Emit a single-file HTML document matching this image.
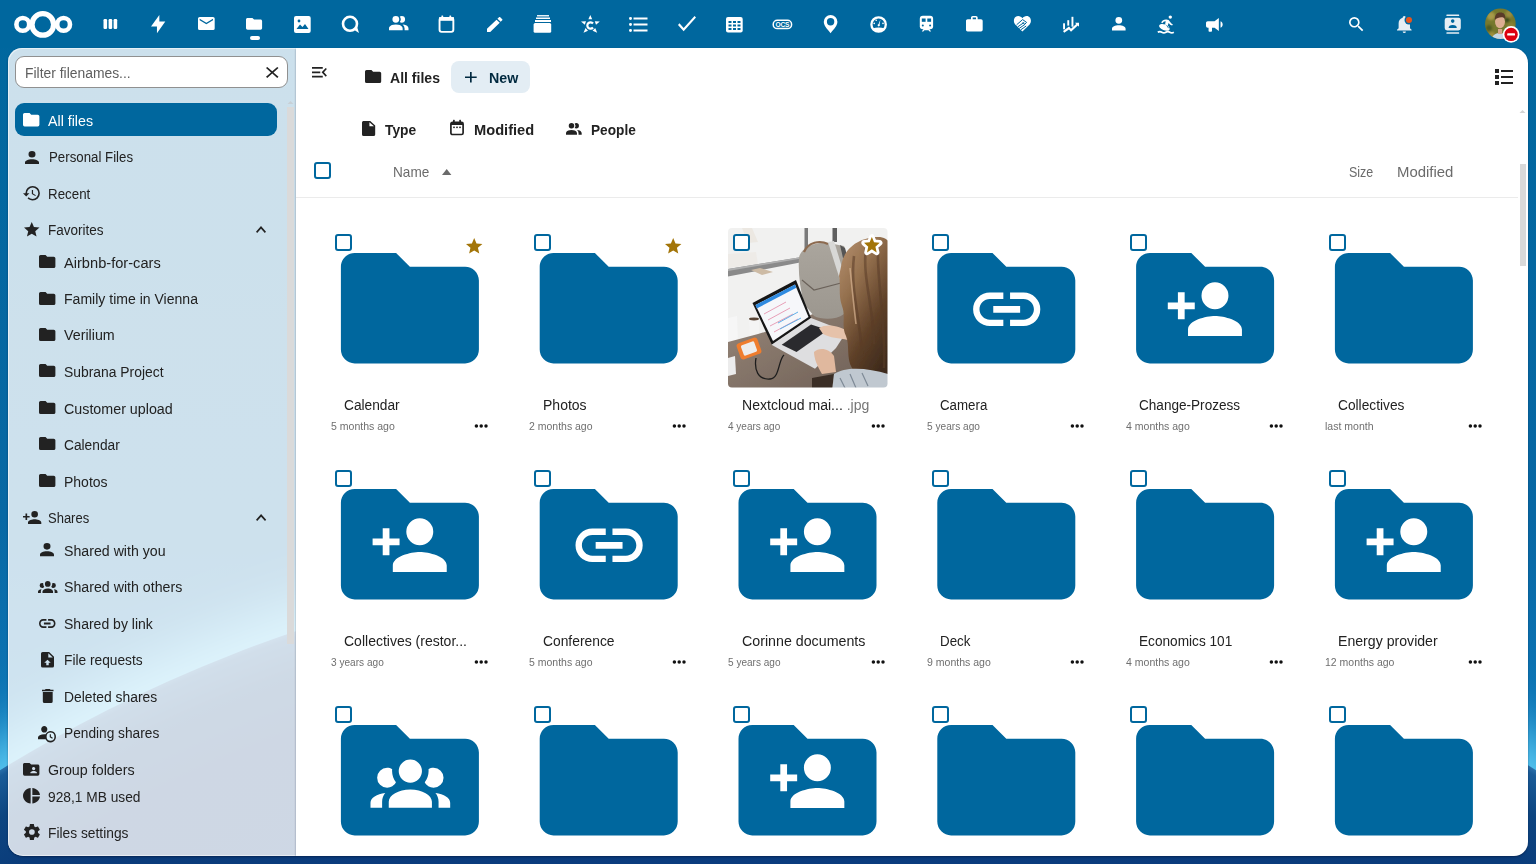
<!DOCTYPE html>
<html><head><meta charset="utf-8">
<style>
*{margin:0;padding:0;box-sizing:border-box}
html,body{width:1536px;height:864px;overflow:hidden}
body{position:relative;font-family:"Liberation Sans",sans-serif;background:#063a70}
.a{position:absolute;display:block;overflow:visible}
.t{position:absolute;white-space:nowrap;line-height:1}
</style></head><body>

<svg class="a" style="left:0;top:0;width:1536px;height:864px" viewBox="0 0 1536 864">
<defs>
<linearGradient id="bgg" x1="0" y1="0" x2="0" y2="864" gradientUnits="userSpaceOnUse">
<stop offset="0" stop-color="#00679e"/><stop offset="0.6" stop-color="#0868a4"/><stop offset="0.8" stop-color="#0c74b4"/><stop offset="1" stop-color="#1080c0"/>
</linearGradient>
<radialGradient id="glb" cx=".5" cy=".5" r=".5"><stop offset="0.75" stop-color="#0a3c7e"/><stop offset="0.93" stop-color="#0a3b7a"/><stop offset="0.97" stop-color="#0d4580"/><stop offset="0.996" stop-color="#1a5c98"/><stop offset="1" stop-color="#2a70aa"/></radialGradient>
<filter id="gblur" x="-20%" y="-20%" width="140%" height="140%"><feGaussianBlur stdDeviation="26"/></filter>
</defs>
<rect width="1536" height="864" fill="url(#bgg)"/>
<ellipse cx="768" cy="1873" rx="1425" ry="1344" fill="#5ccbf4" filter="url(#gblur)"/>
<ellipse cx="768" cy="1873" rx="1400" ry="1319" fill="url(#glb)"/>
</svg>
<div class="a" style="left:0;top:0;width:1536px;height:48px;background:#00679e"></div>
<svg class="a" style="left:0px;top:0px;width:90px;height:48px" viewBox="0 0 90 48"><g fill="none" stroke="#fff"><circle cx="42.8" cy="24.4" r="10.8" stroke-width="5.3"/><circle cx="22.8" cy="24.4" r="6.4" stroke-width="4.6"/><circle cx="63.6" cy="24.4" r="6.4" stroke-width="4.6"/></g></svg>
<svg class="a" style="left:100px;top:16px;width:20px;height:16px" viewBox="0 0 20 16"><g fill="#fff"><rect x="3.5" y="3" width="3.6" height="10" rx="1.2"/><rect x="8.6" y="3" width="3.6" height="10" rx="1.2"/><rect x="13.6" y="3" width="3.6" height="10" rx="1.2"/></g></svg>
<svg class="a" style="left:151.00px;top:15.00px;width:14.30px;height:18.20px" viewBox="6 1 12 22" preserveAspectRatio="none"><path fill="#fff" d="M11 15H6L13 1V9H18L11 23V15Z"/></svg>
<svg class="a" style="left:198.10px;top:17.30px;width:16.70px;height:13.00px" viewBox="2 4 20 16" preserveAspectRatio="none"><path fill="#fff" d="M20,8L12,13L4,8V6L12,11L20,6M20,4H4C2.89,4 2,4.89 2,6V18A2,2 0 0,0 4,20H20A2,2 0 0,0 22,18V6C22,4.89 21.1,4 20,4Z"/></svg>
<svg class="a" style="left:246.40px;top:18.00px;width:16.10px;height:11.70px" viewBox="2 4 20 16" preserveAspectRatio="none"><path fill="#fff" d="M10,4H4C2.89,4 2,4.89 2,6V18A2,2 0 0,0 4,20H20A2,2 0 0,0 22,18V8C22,6.89 21.1,6 20,6H12L10,4Z"/></svg>
<div class="a" style="left:249.5px;top:36px;width:10px;height:4.2px;border-radius:2px;background:#fff"></div>
<svg class="a" style="left:294px;top:15.5px;width:17px;height:17px" viewBox="0 0 17 17"><rect x="0" y="0" width="16.7" height="16.9" rx="2" fill="#fff"/><circle cx="5" cy="5" r="1.4" fill="#00679e"/><path d="M2.5 13 L6 8.5 L8.5 11 L11 8 L14.5 13Z" fill="#00679e"/></svg>
<svg class="a" style="left:340px;top:14px;width:22px;height:22px" viewBox="0 0 22 22"><circle cx="10" cy="9.8" r="7" fill="none" stroke="#fff" stroke-width="2.6"/><path d="M13.5 15.5 L19 19 L17 12.5Z" fill="#fff"/></svg>
<svg class="a" style="left:388.70px;top:16.00px;width:19.50px;height:14.30px" viewBox="2 3.9999475479125977 20 15.000052452087402" preserveAspectRatio="none"><path fill="#fff" d="M16 17V19H2V17S2 13 9 13 16 17 16 17M12.5 7.5A3.5 3.5 0 1 0 9 11A3.5 3.5 0 0 0 12.5 7.5M15.94 13A5.32 5.32 0 0 1 18 17V19H22V17S22 13.37 15.94 13M15 4A3.39 3.39 0 0 0 13.07 4.59A5 5 0 0 1 13.07 10.41A3.39 3.39 0 0 0 15 11A3.5 3.5 0 0 0 15 4Z"/></svg>
<svg class="a" style="left:436px;top:13px;width:22px;height:22px" viewBox="0 0 22 22"><rect x="3.55" y="4.95" width="13.8" height="13.9" rx="2" fill="none" stroke="#fff" stroke-width="1.9"/><rect x="3" y="4.2" width="15" height="3.6" fill="#fff"/><rect x="5.4" y="2.5" width="1.8" height="3" rx=".5" fill="#fff"/><rect x="13.4" y="2.5" width="1.8" height="3" rx=".5" fill="#fff"/></svg>
<svg class="a" style="left:486.50px;top:16.70px;width:15.50px;height:14.90px" viewBox="3 2.997499942779541 18.002500534057617 18.002500534057617" preserveAspectRatio="none"><path fill="#fff" d="M20.71,7.04C21.1,6.65 21.1,6 20.71,5.63L18.37,3.29C18,2.9 17.35,2.9 16.96,3.29L15.12,5.12L18.87,8.87M3,17.25V21H6.75L17.81,9.93L14.06,6.18L3,17.25Z"/></svg>
<svg class="a" style="left:532px;top:14px;width:22px;height:20px" viewBox="0 0 22 20"><g fill="#fff"><rect x="5" y="1" width="12" height="1.5" opacity=".9"/><rect x="4" y="3.5" width="14" height="1.5"/><rect x="3" y="6" width="16" height="2"/><rect x="1.6" y="9" width="17.6" height="9.8" rx="1.5"/></g></svg>
<svg class="a" style="left:578px;top:13px;width:25px;height:22px" viewBox="0 0 25 22"><g fill="#fff"><path d="M12.3 2 L14.2 6.2 L10.4 6.2Z"/><path d="M3 8.5 L8 8.2 L6.8 11.8Z"/><path d="M21.8 8.5 L16.8 8.2 L18 11.8Z"/><path d="M5.5 19.7 L7.5 15 L10 17.8Z"/><path d="M19.2 19.7 L17.2 15 L14.6 17.8Z"/></g><path d="M15 10.5 A3.2 3.2 0 1 0 15 14.5" fill="none" stroke="#fff" stroke-width="2.2"/></svg>
<svg class="a" style="left:628.90px;top:16.70px;width:18.50px;height:14.90px" viewBox="2.5 4.5 18.5 15" preserveAspectRatio="none"><path fill="#fff" d="M7,5H21V7H7V5M7,13V11H21V13H7M4,4.5A1.5,1.5 0 0,1 5.5,6A1.5,1.5 0 0,1 4,7.5A1.5,1.5 0 0,1 2.5,6A1.5,1.5 0 0,1 4,4.5M4,10.5A1.5,1.5 0 0,1 5.5,12A1.5,1.5 0 0,1 4,13.5A1.5,1.5 0 0,1 2.5,12A1.5,1.5 0 0,1 4,10.5M7,19V17H21V19H7M4,16.5A1.5,1.5 0 0,1 5.5,18A1.5,1.5 0 0,1 4,19.5A1.5,1.5 0 0,1 2.5,18A1.5,1.5 0 0,1 4,16.5Z"/></svg>
<svg class="a" style="left:677.70px;top:15.50px;width:18.00px;height:15.20px" viewBox="3.5 5.590000152587891 17.5 13.40999984741211" preserveAspectRatio="none"><path fill="#fff" d="M21,7L9,19L3.5,13.5L4.91,12.09L9,16.17L19.59,5.59L21,7Z"/></svg>
<svg class="a" style="left:726px;top:16.7px;width:17px;height:16px" viewBox="0 0 17 16"><rect x="0" y="0" width="16.7" height="15.5" rx="2" fill="#fff"/><g fill="#00679e"><rect x="2.5" y="4" width="3" height="2"/><rect x="7" y="4" width="3" height="2"/><rect x="11.5" y="4" width="3" height="2"/><rect x="2.5" y="7.5" width="3" height="2"/><rect x="7" y="7.5" width="3" height="2"/><rect x="11.5" y="7.5" width="3" height="2"/><rect x="2.5" y="11" width="3" height="2"/><rect x="7" y="11" width="3" height="2"/><rect x="11.5" y="11" width="3" height="2"/></g></svg>
<svg class="a" style="left:772px;top:18.5px;width:21px;height:11px" viewBox="0 0 21 11"><rect x="1.2" y="1.3" width="18.4" height="8.3" rx="4.15" fill="#00679e" stroke="#fff" stroke-width="1.5"/><text x="10.4" y="8.2" font-size="6.6" font-weight="700" text-anchor="middle" fill="#fff" font-family="Liberation Sans" letter-spacing="-.2">OCS</text></svg>
<svg class="a" style="left:820px;top:12px;width:22px;height:24px" viewBox="0 0 22 24"><path fill="#fff" fill-rule="evenodd" d="M10.6 21.2 C7 17 3.8 13.5 3.8 9.8 A6.8 6.8 0 0 1 17.4 9.8 C17.4 13.5 14.2 17 10.6 21.2Z M10.6 6.1 A3.7 3.7 0 1 0 10.6 13.5 A3.7 3.7 0 1 0 10.6 6.1Z"/></svg>
<svg class="a" style="left:868px;top:13.5px;width:21px;height:21px" viewBox="0 0 21 21"><circle cx="10.6" cy="10.5" r="7.2" fill="none" stroke="#fff" stroke-width="2.3"/><path d="M4.4 14.6 Q10.6 12.2 16.8 14.6 L15.6 16.4 Q10.6 18.6 5.6 16.4Z" fill="#fff"/><path d="M10 11.4 L12.4 5.4 L11.4 11.8Z" fill="#fff"/><circle cx="10.7" cy="11.3" r="1.1" fill="#fff"/><circle cx="6.2" cy="9.4" r=".8" fill="#fff"/><circle cx="8.2" cy="6.2" r=".8" fill="#fff"/><circle cx="15" cy="9.4" r=".8" fill="#fff"/></svg>
<svg class="a" style="left:918px;top:14px;width:17px;height:20px" viewBox="0 0 17 20"><rect x="1.8" y="1.8" width="13.3" height="13.5" rx="3" fill="#fff"/><rect x="3.8" y="4.5" width="3.8" height="3.3" fill="#00679e"/><rect x="9.3" y="4.5" width="3.8" height="3.3" fill="#00679e"/><circle cx="4.8" cy="11.5" r="1" fill="#00679e"/><circle cx="12.1" cy="11.5" r="1" fill="#00679e"/><path d="M3.8 17.6 L5.5 15 H11.4 L13.1 17.6 H11.6 L10.5 16.2 H6.4 L5.3 17.6Z" fill="#fff"/></svg>
<svg class="a" style="left:966.20px;top:15.80px;width:16.70px;height:15.40px" viewBox="2 2 20 19" preserveAspectRatio="none"><path fill="#fff" d="M10,2H14A2,2 0 0,1 16,4V6H20A2,2 0 0,1 22,8V19A2,2 0 0,1 20,21H4C2.89,21 2,20.1 2,19V8C2,6.89 2.89,6 4,6H8V4C8,2.89 8.89,2 10,2M14,6V4H10V6H14Z"/></svg>
<svg class="a" style="left:1012px;top:14px;width:21px;height:20px" viewBox="0 0 21 20"><path d="M10.4 17.4 L3.2 10.4 C0.8 8 1.6 2 6.2 2 C8 2 9.4 3 10.4 4.2 C11.4 3 12.8 2 14.6 2 C19.2 2 20 8 17.6 10.4Z" fill="#fff"/><g stroke="#00679e" stroke-width="1" fill="none" stroke-linecap="butt"><path d="M4.6 10.8 L10.6 5.6 L14.6 8.4 L12.8 10.2 L10.6 8.6"/><path d="M5.8 12.8 L12.2 8.4"/><path d="M7.2 14.4 L13.2 10.2"/><path d="M8.8 15.8 L14.2 12"/></g></svg>
<svg class="a" style="left:1061px;top:14px;width:20px;height:20px" viewBox="0 0 20 20"><g fill="#fff"><rect x="2.1" y="9.3" width="1.9" height="6"/><rect x="6.3" y="6.2" width="1.9" height="5.4"/><rect x="10.5" y="2.8" width="1.9" height="9.9"/><path d="M2 17 L8 12.6 L10 14.8 L15.2 10 L14 8.8 H18 V12.8 L16.8 11.6 L10 17.8 L8 15.6 L3.2 18.8Z"/></g></svg>
<svg class="a" style="left:1111.60px;top:17.30px;width:13.60px;height:13.40px" viewBox="4 4 16 16" preserveAspectRatio="none"><path fill="#fff" d="M12,4A4,4 0 0,1 16,8A4,4 0 0,1 12,12A4,4 0 0,1 8,8A4,4 0 0,1 12,4M12,14C16.42,14 20,15.79 20,18V20H4V18C4,15.79 7.58,14 12,14Z"/></svg>
<svg class="a" style="left:1156px;top:13px;width:21px;height:22px" viewBox="0 0 21 22"><g fill="#fff"><circle cx="14.3" cy="4.1" r="1.7"/><path d="M5.2 9.4 C6 7.6 8 6.4 10.5 6.6 L12.6 7.1 L15.4 10.6 L16.9 11.4 L16.1 12.6 L14.2 11.7 L12.6 9.9 L11.8 12.4 L13.2 15 L11.2 15.8 L9.6 13.1 L9.2 10.1 L10 8.4 L8 8.6 L6.3 10.2Z"/><ellipse cx="8.4" cy="14.3" rx="5.6" ry="2.9" transform="rotate(22 8.4 14.3)"/></g><path d="M10.6 12.2 L12.6 15.2" stroke="#00679e" stroke-width=".8"/><path d="M1.8 19.2 Q3.8 17.9 5.8 19.2 T9.8 19.2 T13.8 19.2 T17.8 19.2" fill="none" stroke="#fff" stroke-width="1.7"/></svg>
<svg class="a" style="left:1205.70px;top:17.90px;width:16.70px;height:13.70px" viewBox="2 4 19.5 17" preserveAspectRatio="none"><path fill="#fff" d="M12,8H4A2,2 0 0,0 2,10V14A2,2 0 0,0 4,16H5V20A1,1 0 0,0 6,21H8A1,1 0 0,0 9,20V16H12L17,20V4L12,8M21.5,12C21.5,13.71 20.54,15.26 19,16V8C20.53,8.75 21.5,10.3 21.5,12Z"/></svg>
<svg class="a" style="left:1349.00px;top:16.60px;width:14.30px;height:14.30px" viewBox="3 3 17.5 17.5" preserveAspectRatio="none"><path fill="#fff" d="M9.5,3A6.5,6.5 0 0,1 16,9.5C16,11.11 15.41,12.59 14.44,13.73L14.71,14H15.5L20.5,19L19,20.5L14,15.5V14.71L13.73,14.44C12.59,15.41 11.11,16 9.5,16A6.5,6.5 0 0,1 3,9.5A6.5,6.5 0 0,1 9.5,3M9.5,5C7,5 5,7 5,9.5C5,12 7,14 9.5,14C12,14 14,12 14,9.5C14,7 12,5 9.5,5Z"/></svg>
<svg class="a" style="left:1397.20px;top:15.60px;width:14.60px;height:17.00px" viewBox="3 2 18 21" preserveAspectRatio="none"><path fill="#e6eef4" d="M21,19V20H3V19L5,17V11C5,7.9 7.03,5.17 10,4.29C10,4.19 10,4.1 10,4A2,2 0 0,1 12,2A2,2 0 0,1 14,4C14,4.1 14,4.19 14,4.29C16.97,5.17 19,7.9 19,11V17L21,19M14,21A2,2 0 0,1 12,23A2,2 0 0,1 10,21"/></svg>
<div class="a" style="left:1406.1px;top:17px;width:6px;height:6px;border-radius:50%;background:#e9541c;box-shadow:0 0 0 1.5px #00679e"></div>
<svg class="a" style="left:1443px;top:13px;width:19px;height:22px" viewBox="0 0 19 22"><g fill="#e6eef4"><rect x="3.4" y="1.5" width="12.8" height="1.5" rx=".5"/><rect x="3.4" y="19.2" width="12.8" height="1.5" rx=".5"/><rect x="1.7" y="4.7" width="16.1" height="12.8" rx="2.4"/></g><circle cx="9.7" cy="8.1" r="1.8" fill="#00679e"/><path d="M5.6 14.9 A4.1 3 0 0 1 13.8 14.9Z" fill="#00679e"/></svg>
<svg class="a" style="left:1484px;top:7px;width:40px;height:40px" viewBox="0 0 40 40">
<defs><clipPath id="avc"><circle cx="16.4" cy="16.8" r="15.3"/></clipPath>
<filter id="avb"><feGaussianBlur stdDeviation="1.2"/></filter></defs>
<g clip-path="url(#avc)"><rect width="40" height="40" fill="#76782e"/>
<g filter="url(#avb)"><circle cx="7" cy="9" r="4" fill="#a89a48"/><circle cx="25" cy="7" r="3.5" fill="#9a8c40"/><circle cx="27" cy="19" r="3.5" fill="#8a8238"/><circle cx="5" cy="21" r="3" fill="#4e5a22"/><circle cx="23" cy="13" r="2.5" fill="#3e4a1c"/><circle cx="8" cy="28" r="3" fill="#a0903c"/></g>
<path d="M7.5 34 C7.5 28.5 11.5 26 16 26 C20.5 26 23.5 28.5 23.5 34Z" fill="#c5d6e4"/>
<rect x="14" y="22" width="4.2" height="5" fill="#d6a488"/>
<ellipse cx="16" cy="14.8" rx="5" ry="6.4" fill="#dcae92"/>
<path d="M10.8 13 C10.6 7.4 13.4 5.6 16.4 5.6 C19.8 5.6 21.6 7.6 21.4 12 C19.6 9.2 14 9.6 10.8 13Z" fill="#5a3a28"/>
</g>
<circle cx="27.1" cy="27.4" r="8.4" fill="#fff"/><circle cx="27.1" cy="27.4" r="6.7" fill="#dd0010"/><rect x="23.2" y="26.3" width="7.8" height="2.3" rx=".6" fill="#fff"/>
</svg>
<div class="a" style="left:8px;top:48px;width:288px;height:808px;border-radius:14px 0 0 15px;background:rgba(255,255,255,0.8);box-shadow:inset 1px 1px 0 rgba(255,255,255,.5),inset 0 -1px 0 rgba(255,255,255,.5),0 1px 2px rgba(0,10,40,.45);overflow:hidden"></div>
<div class="a" style="left:287.2px;top:106.7px;width:6.6px;height:537px;background:#dadada"></div>
<div class="a" style="left:15px;top:55.7px;width:273px;height:32.5px;border:1.8px solid #909090;border-radius:9px;background:#fff"></div>
<div class="t" style="left:25.30px;top:65.05px;font-size:15.1px;color:#5e5e5e;font-weight:400;transform:scaleX(0.9195);transform-origin:0 0;">Filter filenames...</div>
<svg class="a" style="left:265.60px;top:67.20px;width:12.50px;height:10.90px" viewBox="5 5 14 14" preserveAspectRatio="none"><path fill="#222" d="M19,6.41L17.59,5L12,10.59L6.41,5L5,6.41L10.59,12L5,17.59L6.41,19L12,13.41L17.59,19L19,17.59L13.41,12L19,6.41Z"/></svg>
<div class="a" style="left:15.1px;top:103px;width:262.2px;height:33.2px;border-radius:9px;background:#00679e"></div>
<svg class="a" style="left:23.40px;top:113.00px;width:16.40px;height:13.50px" viewBox="2 4 20 16" preserveAspectRatio="none"><path fill="#fff" d="M10,4H4C2.89,4 2,4.89 2,6V18A2,2 0 0,0 4,20H20A2,2 0 0,0 22,18V8C22,6.89 21.1,6 20,6H12L10,4Z"/></svg>
<div class="t" style="left:48.00px;top:112.90px;font-size:15.2px;color:#fff;font-weight:400;transform:scaleX(0.9366);transform-origin:0 0;">All files</div>
<svg class="a" style="left:24.50px;top:151.00px;width:14.00px;height:13.00px" viewBox="4 4 16 16" preserveAspectRatio="none"><path fill="#222" d="M12,4A4,4 0 0,1 16,8A4,4 0 0,1 12,12A4,4 0 0,1 8,8A4,4 0 0,1 12,4M12,14C16.42,14 20,15.79 20,18V20H4V18C4,15.79 7.58,14 12,14Z"/></svg>
<div class="t" style="left:48.90px;top:149.00px;font-size:15.2px;color:#222;font-weight:400;transform:scaleX(0.8732);transform-origin:0 0;">Personal Files</div>
<svg class="a" style="left:23.10px;top:186.00px;width:16.90px;height:14.50px" viewBox="1 3 21 18" preserveAspectRatio="none"><path fill="#222" d="M13.5,8H12V13L16.28,15.54L17,14.33L13.5,12.25V8M13,3A9,9 0 0,0 4,12H1L4.96,16.03L9,12H6A7,7 0 0,1 13,5A7,7 0 0,1 20,12A7,7 0 0,1 13,19C11.07,19 9.32,18.21 8.06,16.94L6.64,18.36C8.27,20 10.5,21 13,21A9,9 0 0,0 22,12A9,9 0 0,0 13,3"/></svg>
<div class="t" style="left:48.30px;top:185.60px;font-size:15.2px;color:#222;font-weight:400;transform:scaleX(0.8784);transform-origin:0 0;">Recent</div>
<svg class="a" style="left:23.70px;top:222.00px;width:15.50px;height:14.50px" viewBox="2 2 20 19" preserveAspectRatio="none"><path fill="#222" d="M12,17.27L18.18,21L16.54,13.970L22,9.24L14.81,8.62L12,2L9.19,8.62L2,9.24L7.45,13.97L5.82,21L12,17.27Z"/></svg>
<div class="t" style="left:48.30px;top:222.10px;font-size:15.2px;color:#222;font-weight:400;transform:scaleX(0.8896);transform-origin:0 0;">Favorites</div>
<svg class="a" style="left:256.00px;top:226.00px;width:10.00px;height:7.00px" viewBox="6 8 12 7.409999847412109" preserveAspectRatio="none"><path fill="#222" d="M7.41,15.41L12,10.83L16.59,15.41L18,14L12,8L6,14L7.41,15.41Z"/></svg>
<svg class="a" style="left:38.80px;top:255.20px;width:16.40px;height:13.10px" viewBox="2 4 20 16" preserveAspectRatio="none"><path fill="#222" d="M10,4H4C2.89,4 2,4.89 2,6V18A2,2 0 0,0 4,20H20A2,2 0 0,0 22,18V8C22,6.89 21.1,6 20,6H12L10,4Z"/></svg>
<div class="t" style="left:63.60px;top:254.90px;font-size:15.2px;color:#222;font-weight:400;transform:scaleX(0.9630);transform-origin:0 0;">Airbnb-for-cars</div>
<svg class="a" style="left:38.80px;top:291.50px;width:16.40px;height:13.10px" viewBox="2 4 20 16" preserveAspectRatio="none"><path fill="#222" d="M10,4H4C2.89,4 2,4.89 2,6V18A2,2 0 0,0 4,20H20A2,2 0 0,0 22,18V8C22,6.89 21.1,6 20,6H12L10,4Z"/></svg>
<div class="t" style="left:63.60px;top:291.20px;font-size:15.2px;color:#222;font-weight:400;transform:scaleX(0.9246);transform-origin:0 0;">Family time in Vienna</div>
<svg class="a" style="left:38.80px;top:327.70px;width:16.40px;height:13.10px" viewBox="2 4 20 16" preserveAspectRatio="none"><path fill="#222" d="M10,4H4C2.89,4 2,4.89 2,6V18A2,2 0 0,0 4,20H20A2,2 0 0,0 22,18V8C22,6.89 21.1,6 20,6H12L10,4Z"/></svg>
<div class="t" style="left:63.60px;top:327.40px;font-size:15.2px;color:#222;font-weight:400;transform:scaleX(0.9396);transform-origin:0 0;">Verilium</div>
<svg class="a" style="left:38.80px;top:364.40px;width:16.40px;height:13.10px" viewBox="2 4 20 16" preserveAspectRatio="none"><path fill="#222" d="M10,4H4C2.89,4 2,4.89 2,6V18A2,2 0 0,0 4,20H20A2,2 0 0,0 22,18V8C22,6.89 21.1,6 20,6H12L10,4Z"/></svg>
<div class="t" style="left:63.60px;top:364.10px;font-size:15.2px;color:#222;font-weight:400;transform:scaleX(0.9138);transform-origin:0 0;">Subrana Project</div>
<svg class="a" style="left:38.80px;top:401.00px;width:16.40px;height:13.10px" viewBox="2 4 20 16" preserveAspectRatio="none"><path fill="#222" d="M10,4H4C2.89,4 2,4.89 2,6V18A2,2 0 0,0 4,20H20A2,2 0 0,0 22,18V8C22,6.89 21.1,6 20,6H12L10,4Z"/></svg>
<div class="t" style="left:63.60px;top:400.70px;font-size:15.2px;color:#222;font-weight:400;transform:scaleX(0.9400);transform-origin:0 0;">Customer upload</div>
<svg class="a" style="left:38.80px;top:437.20px;width:16.40px;height:13.10px" viewBox="2 4 20 16" preserveAspectRatio="none"><path fill="#222" d="M10,4H4C2.89,4 2,4.89 2,6V18A2,2 0 0,0 4,20H20A2,2 0 0,0 22,18V8C22,6.89 21.1,6 20,6H12L10,4Z"/></svg>
<div class="t" style="left:63.60px;top:436.90px;font-size:15.2px;color:#222;font-weight:400;transform:scaleX(0.9046);transform-origin:0 0;">Calendar</div>
<svg class="a" style="left:38.80px;top:473.90px;width:16.40px;height:13.10px" viewBox="2 4 20 16" preserveAspectRatio="none"><path fill="#222" d="M10,4H4C2.89,4 2,4.89 2,6V18A2,2 0 0,0 4,20H20A2,2 0 0,0 22,18V8C22,6.89 21.1,6 20,6H12L10,4Z"/></svg>
<div class="t" style="left:63.60px;top:473.60px;font-size:15.2px;color:#222;font-weight:400;transform:scaleX(0.9214);transform-origin:0 0;">Photos</div>
<svg class="a" style="left:22.70px;top:510.50px;width:18.30px;height:13.00px" viewBox="1 4 22 16" preserveAspectRatio="none"><path fill="#222" d="M15,14C12.33,14 7,15.33 7,18V20H23V18C23,15.33 17.67,14 15,14M6,10V7H4V10H1V12H4V15H6V12H9V10M15,12A4,4 0 0,0 19,8A4,4 0 0,0 15,4A4,4 0 0,0 11,8A4,4 0 0,0 15,12Z"/></svg>
<div class="t" style="left:48.20px;top:510.10px;font-size:15.2px;color:#222;font-weight:400;transform:scaleX(0.8556);transform-origin:0 0;">Shares</div>
<svg class="a" style="left:255.60px;top:513.50px;width:10.20px;height:7.10px" viewBox="6 8 12 7.409999847412109" preserveAspectRatio="none"><path fill="#222" d="M7.41,15.41L12,10.83L16.59,15.41L18,14L12,8L6,14L7.41,15.41Z"/></svg>
<svg class="a" style="left:40.00px;top:543.30px;width:14.00px;height:13.30px" viewBox="4 4 16 16" preserveAspectRatio="none"><path fill="#222" d="M12,4A4,4 0 0,1 16,8A4,4 0 0,1 12,12A4,4 0 0,1 8,8A4,4 0 0,1 12,4M12,14C16.42,14 20,15.79 20,18V20H4V18C4,15.79 7.58,14 12,14Z"/></svg>
<div class="t" style="left:63.60px;top:542.70px;font-size:15.2px;color:#222;font-weight:400;transform:scaleX(0.9330);transform-origin:0 0;">Shared with you</div>
<svg class="a" style="left:37.50px;top:581.00px;width:19.50px;height:12.00px" viewBox="0 5.5 24 14.5" preserveAspectRatio="none"><path fill="#222" d="M12,5.5A3.5,3.5 0 0,1 15.5,9A3.5,3.5 0 0,1 12,12.5A3.5,3.5 0 0,1 8.5,9A3.5,3.5 0 0,1 12,5.5M5,8C5.56,8 6.08,8.15 6.53,8.42C6.38,9.85 6.8,11.27 7.66,12.38C7.16,13.34 6.16,14 5,14A3,3 0 0,1 2,11A3,3 0 0,1 5,8M19,8A3,3 0 0,1 22,11A3,3 0 0,1 19,14C17.84,14 16.84,13.34 16.34,12.38C17.2,11.27 17.62,9.850 17.47,8.42C17.92,8.15 18.44,8 19,8M5.5,18.25C5.5,16.18 8.41,14.5 12,14.5C15.59,14.5 18.5,16.18 18.5,18.25V20H5.5V18.25M0,20V18.5C0,17.11 1.890,15.940 4.45,15.6C3.86,16.28 3.5,17.22 3.5,18.25V20H0M24,20H20.5V18.25C20.5,17.22 20.14,16.28 19.55,15.6C22.11,15.94 24,17.11 24,18.5V20Z"/></svg>
<div class="t" style="left:63.60px;top:579.20px;font-size:15.2px;color:#222;font-weight:400;transform:scaleX(0.9342);transform-origin:0 0;">Shared with others</div>
<svg class="a" style="left:38.50px;top:618.70px;width:16.50px;height:9.00px" viewBox="2 7 20 10" preserveAspectRatio="none"><path fill="#222" d="M3.9,12C3.9,10.29 5.29,8.9 7,8.9H11V7H7A5,5 0 0,0 2,12A5,5 0 0,0 7,17H11V15.1H7C5.29,15.1 3.9,13.71 3.9,12M8,13H16V11H8V13M17,7H13V8.9H17C18.71,8.9 20.1,10.29 20.1,12C20.1,13.71 18.71,15.1 17,15.1H13V17H17A5,5 0 0,0 22,12A5,5 0 0,0 17,7Z"/></svg>
<div class="t" style="left:63.60px;top:615.70px;font-size:15.2px;color:#222;font-weight:400;transform:scaleX(0.9227);transform-origin:0 0;">Shared by link</div>
<svg class="a" style="left:40.50px;top:652.00px;width:13.00px;height:15.50px" viewBox="4 2 16 20" preserveAspectRatio="none"><path fill="#222" d="M14,2H6A2,2 0 0,0 4,4V20A2,2 0 0,0 6,22H18A2,2 0 0,0 20,20V8L14,2M13.5,16V19H10.5V16H8L12,12L16,16H13.5M13,9V3.5L18.5,9H13Z"/></svg>
<div class="t" style="left:63.60px;top:652.20px;font-size:15.2px;color:#222;font-weight:400;transform:scaleX(0.9044);transform-origin:0 0;">File requests</div>
<svg class="a" style="left:41.50px;top:688.50px;width:11.50px;height:14.00px" viewBox="5 3 14 18" preserveAspectRatio="none"><path fill="#222" d="M19,4H15.5L14.5,3H9.5L8.5,4H5V6H19M6,19A2,2 0 0,0 8,21H16A2,2 0 0,0 18,19V7H6V19Z"/></svg>
<div class="t" style="left:63.60px;top:688.70px;font-size:15.2px;color:#222;font-weight:400;transform:scaleX(0.9126);transform-origin:0 0;">Deleted shares</div>
<svg class="a" style="left:38.00px;top:725.50px;width:18.00px;height:16.50px" viewBox="1 4 23.000381469726562 20" preserveAspectRatio="none"><path fill="#222" d="M10.63,14.1C12.23,10.58 16.38,9.03 19.9,10.63C23.42,12.23 24.97,16.38 23.37,19.9C22.24,22.4 19.75,24 17,24C14.3,24 11.83,22.44 10.67,20H1V18C1.06,16.86 1.84,15.93 3.34,15.18C4.84,14.43 6.72,14.04 9,14C9.57,14 10.11,14.05 10.63,14.1V14.1M9,4C10.12,4.03 11.06,4.42 11.81,5.17C12.56,5.92 12.93,6.86 12.93,8C12.93,9.14 12.56,10.08 11.81,10.83C11.06,11.58 10.12,11.95 9,11.95C7.88,11.95 6.94,11.58 6.19,10.830C5.44,10.08 5.07,9.14 5.07,8C5.07,6.86 5.44,5.92 6.19,5.17C6.94,4.42 7.88,4.03 9,4M17,22A5,5 0 0,0 22,17A5,5 0 0,0 17,12A5,5 0 0,0 12,17A5,5 0 0,0 17,22M16,14H17.5V16.82L19.94,18.23L19.19,19.53L16,17.69V14Z"/></svg>
<div class="t" style="left:63.60px;top:725.20px;font-size:15.2px;color:#222;font-weight:400;transform:scaleX(0.9023);transform-origin:0 0;">Pending shares</div>
<svg class="a" style="left:23.10px;top:762.80px;width:16.40px;height:12.70px" viewBox="2 4 20 16" preserveAspectRatio="none"><path fill="#222" d="M19,17H11V16C11,14.67 13.67,14 15,14C16.33,14 19,14.67 19,16M15,9A2,2 0 0,1 17,11A2,2 0 0,1 15,13A2,2 0 0,1 13,11C13,9.89 13.9,9 15,9M20,6H12L10,4H4C2.89,4 2,4.89 2,6V18A2,2 0 0,0 4,20H20A2,2 0 0,0 22,18V8C22,6.89 21.1,6 20,6Z"/></svg>
<div class="t" style="left:48.30px;top:761.50px;font-size:15.2px;color:#222;font-weight:400;transform:scaleX(0.9414);transform-origin:0 0;">Group folders</div>
<svg class="a" style="left:23.00px;top:788.30px;width:17.00px;height:15.50px" viewBox="2 2 20 20" preserveAspectRatio="none"><path fill="#222" d="M11,2V22C5.9,21.5 2,17.2 2,12C2,6.8 5.9,2.5 11,2M13,2V11H22C21.5,6.2 17.8,2.5 13,2M13,13V22C17.7,21.5 21.5,17.8 22,13H13Z"/></svg>
<div class="t" style="left:48.30px;top:788.50px;font-size:15.2px;color:#222;font-weight:400;transform:scaleX(0.9056);transform-origin:0 0;">928,1 MB used</div>
<svg class="a" style="left:23.70px;top:824.20px;width:15.80px;height:16.10px" viewBox="2.2706682682037354 2 19.454246520996094 20" preserveAspectRatio="none"><path fill="#222" d="M12,15.5A3.5,3.5 0 0,1 8.5,12A3.5,3.5 0 0,1 12,8.5A3.5,3.5 0 0,1 15.5,12A3.5,3.5 0 0,1 12,15.5M19.43,12.97C19.47,12.65 19.5,12.33 19.5,12C19.5,11.67 19.47,11.34 19.43,11L21.54,9.37C21.73,9.22 21.78,8.95 21.66,8.73L19.66,5.27C19.54,5.05 19.27,4.96 19.05,5.05L16.56,6.05C16.04,5.66 15.5,5.32 14.87,5.07L14.5,2.42C14.46,2.18 14.25,2 14,2H10C9.75,2 9.54,2.18 9.5,2.42L9.13,5.07C8.5,5.32 7.96,5.66 7.44,6.05L4.95,5.05C4.73,4.96 4.46,5.05 4.34,5.27L2.34,8.73C2.21,8.95 2.27,9.22 2.46,9.37L4.57,11C4.53,11.34 4.5,11.67 4.5,12C4.5,12.33 4.53,12.65 4.57,12.97L2.46,14.63C2.27,14.78 2.21,15.05 2.34,15.27L4.34,18.73C4.46,18.95 4.73,19.03 4.95,18.95L7.44,17.94C7.96,18.34 8.5,18.68 9.13,18.93L9.5,21.58C9.54,21.82 9.75,22 10,22H14C14.25,22 14.46,21.82 14.5,21.58L14.87,18.93C15.5,18.67 16.04,18.34 16.56,17.94L19.05,18.95C19.27,19.03 19.54,18.95 19.66,18.73L21.66,15.27C21.78,15.05 21.73,14.78 21.54,14.63L19.43,12.97Z"/></svg>
<div class="t" style="left:48.30px;top:824.90px;font-size:15.2px;color:#222;font-weight:400;transform:scaleX(0.9076);transform-origin:0 0;">Files settings</div>
<div class="a" style="left:296px;top:48px;width:1232px;height:808px;border-radius:0 15px 14px 0;background:#fff;box-shadow:0 1px 2px rgba(0,10,40,.45)"></div>
<svg class="a" style="left:312.00px;top:67.20px;width:14.90px;height:10.60px" viewBox="3 6 18 12" preserveAspectRatio="none"><path fill="#222" d="M21,15.61L19.59,17L14.58,12L19.59,7L21,8.39L17.44,12L21,15.61M3,6H16V8H3V6M3,13V11H13V13H3M3,18V16H16V18H3Z"/></svg>
<svg class="a" style="left:365.20px;top:70.30px;width:16.20px;height:13.10px" viewBox="2 4 20 16" preserveAspectRatio="none"><path fill="#222" d="M10,4H4C2.89,4 2,4.89 2,6V18A2,2 0 0,0 4,20H20A2,2 0 0,0 22,18V8C22,6.89 21.1,6 20,6H12L10,4Z"/></svg>
<div class="t" style="left:389.90px;top:70.80px;font-size:14.6px;color:#222;font-weight:700;transform:scaleX(0.9628);transform-origin:0 0;">All files</div>
<div class="a" style="left:451.4px;top:60.6px;width:78.5px;height:32.5px;border-radius:8px;background:#e3edf4"></div>
<svg class="a" style="left:465.30px;top:72.00px;width:11.70px;height:10.60px" viewBox="5 5 14 14" preserveAspectRatio="none"><path fill="#00293f" d="M19,13H13V19H11V13H5V11H11V5H13V11H19V13Z"/></svg>
<div class="t" style="left:488.90px;top:70.80px;font-size:14.6px;color:#00293f;font-weight:700;transform:scaleX(0.9751);transform-origin:0 0;">New</div>
<svg class="a" style="left:1495.00px;top:68.60px;width:18.00px;height:16.00px" viewBox="3 4 18 16" preserveAspectRatio="none"><path fill="#222" d="M3,4H7V8H3V4M9,5V7H21V5H9M3,10H7V14H3V10M9,11V13H21V11H9M3,16H7V20H3V16M9,17V19H21V17H9"/></svg>
<svg class="a" style="left:362.10px;top:121.10px;width:13.20px;height:15.10px" viewBox="4 2 16 20" preserveAspectRatio="none"><path fill="#222" d="M13,9V3.5L18.5,9M6,2C4.89,2 4,2.89 4,4V20A2,2 0 0,0 6,22H18A2,2 0 0,0 20,20V8L14,2H6Z"/></svg>
<div class="t" style="left:385.40px;top:122.80px;font-size:14.6px;color:#222;font-weight:700;transform:scaleX(0.9456);transform-origin:0 0;">Type</div>
<svg class="a" style="left:449px;top:119px;width:16px;height:17px" viewBox="0 0 16 17"><rect x="1.9" y="3.4" width="12.2" height="12.1" rx="1.6" fill="none" stroke="#222" stroke-width="1.7"/><rect x="1.9" y="3.4" width="12.2" height="2.6" fill="#222"/><rect x="4" y="0.8" width="1.7" height="3.2" rx=".4" fill="#222"/><rect x="10.3" y="0.8" width="1.7" height="3.2" rx=".4" fill="#222"/><rect x="4.2" y="7.6" width="1.6" height="1.5" fill="#222"/><rect x="7.2" y="7.6" width="1.6" height="1.5" fill="#222"/><rect x="10.2" y="7.6" width="1.6" height="1.5" fill="#222"/></svg>
<div class="t" style="left:473.50px;top:122.80px;font-size:14.6px;color:#222;font-weight:700;transform:scaleX(1.0032);transform-origin:0 0;">Modified</div>
<svg class="a" style="left:566.00px;top:122.50px;width:15.70px;height:11.70px" viewBox="2 3.9999475479125977 20 15.000052452087402" preserveAspectRatio="none"><path fill="#222" d="M16 17V19H2V17S2 13 9 13 16 17 16 17M12.5 7.5A3.5 3.5 0 1 0 9 11A3.5 3.5 0 0 0 12.5 7.5M15.94 13A5.32 5.32 0 0 1 18 17V19H22V17S22 13.37 15.94 13M15 4A3.39 3.39 0 0 0 13.07 4.59A5 5 0 0 1 13.07 10.41A3.39 3.39 0 0 0 15 11A3.5 3.5 0 0 0 15 4Z"/></svg>
<div class="t" style="left:591.20px;top:122.80px;font-size:14.6px;color:#222;font-weight:700;transform:scaleX(0.9358);transform-origin:0 0;">People</div>
<div class="a" style="left:314.1px;top:162.3px;width:17px;height:17px;border:2.2px solid #00679e;border-radius:3px"></div>
<div class="t" style="left:392.80px;top:164.80px;font-size:14.6px;color:#6b6b6b;font-weight:400;transform:scaleX(0.9319);transform-origin:0 0;">Name</div>
<svg class="a" style="left:441.90px;top:168.50px;width:9.40px;height:6.10px" viewBox="7 10 10 5" preserveAspectRatio="none"><path fill="#6b6b6b" d="M7,15L12,10L17,15H7Z"/></svg>
<div class="t" style="left:1348.90px;top:164.70px;font-size:14.6px;color:#6b6b6b;font-weight:400;transform:scaleX(0.8557);transform-origin:0 0;">Size</div>
<div class="t" style="left:1397.00px;top:164.70px;font-size:14.6px;color:#6b6b6b;font-weight:400;transform:scaleX(1.0220);transform-origin:0 0;">Modified</div>
<div class="a" style="left:296px;top:197px;width:1222px;height:1px;background:#ebebeb"></div>
<div class="a" style="left:1519.5px;top:164px;width:6.5px;height:102px;background:#d9d9d9"></div>
<svg class="a" style="left:1518px;top:108px;width:9px;height:6px" viewBox="0 0 9 6"><path d="M1.5 5 L4.5 2 L7.5 5Z" fill="#d4d4d4"/></svg>
<svg class="a" style="left:286px;top:99px;width:9px;height:6px" viewBox="0 0 9 6"><path d="M1.5 5 L4.5 2 L7.5 5Z" fill="#c8d0d6"/></svg>
<svg class="a" style="left:0;top:0;width:1536px;height:864px" viewBox="0 0 1536 864"><path fill="#00679e" transform="translate(327.10,225.40) scale(6.9)" d="M10,4H4C2.89,4 2,4.89 2,6V18A2,2 0 0,0 4,20H20A2,2 0 0,0 22,18V8C22,6.89 21.1,6 20,6H12L10,4Z"/></svg>
<div class="a" style="left:335.20px;top:233.60px;width:17px;height:17px;border:2.2px solid #00679e;border-radius:3px;background:#fff"></div>
<svg class="a" style="left:465.80px;top:237.50px;width:16.40px;height:15.60px" viewBox="2 2 20 19" preserveAspectRatio="none"><path fill="#a37508" d="M12,17.27L18.18,21L16.54,13.970L22,9.24L14.81,8.62L12,2L9.19,8.62L2,9.24L7.45,13.97L5.82,21L12,17.27Z"/></svg>
<div class="t" style="left:344.00px;top:397.15px;font-size:15.3px;color:#222;font-weight:400;transform:scaleX(0.8971);transform-origin:0 0;">Calendar</div>
<div class="t" style="left:330.50px;top:420.50px;font-size:11.2px;color:#6f6f6f;font-weight:400;transform:scaleX(0.9415);transform-origin:0 0;">5 months ago</div>
<svg class="a" style="left:474.50px;top:423.50px;width:14px;height:4px" viewBox="0 0 14 4"><g fill="#111"><circle cx="1.4" cy="2" r="1.75"/><circle cx="6.2" cy="2" r="1.75"/><circle cx="11" cy="2" r="1.75"/></g></svg>
<svg class="a" style="left:0;top:0;width:1536px;height:864px" viewBox="0 0 1536 864"><path fill="#00679e" transform="translate(525.90,225.40) scale(6.9)" d="M10,4H4C2.89,4 2,4.89 2,6V18A2,2 0 0,0 4,20H20A2,2 0 0,0 22,18V8C22,6.89 21.1,6 20,6H12L10,4Z"/></svg>
<div class="a" style="left:534.00px;top:233.60px;width:17px;height:17px;border:2.2px solid #00679e;border-radius:3px;background:#fff"></div>
<svg class="a" style="left:664.60px;top:237.50px;width:16.40px;height:15.60px" viewBox="2 2 20 19" preserveAspectRatio="none"><path fill="#a37508" d="M12,17.27L18.18,21L16.54,13.970L22,9.24L14.81,8.62L12,2L9.19,8.62L2,9.24L7.45,13.97L5.82,21L12,17.27Z"/></svg>
<div class="t" style="left:542.80px;top:397.15px;font-size:15.3px;color:#222;font-weight:400;transform:scaleX(0.9154);transform-origin:0 0;">Photos</div>
<div class="t" style="left:529.30px;top:420.50px;font-size:11.2px;color:#6f6f6f;font-weight:400;transform:scaleX(0.9371);transform-origin:0 0;">2 months ago</div>
<svg class="a" style="left:673.30px;top:423.50px;width:14px;height:4px" viewBox="0 0 14 4"><g fill="#111"><circle cx="1.4" cy="2" r="1.75"/><circle cx="6.2" cy="2" r="1.75"/><circle cx="11" cy="2" r="1.75"/></g></svg>
<svg class="a" style="left:727.5px;top:228.2px;width:160px;height:160px" viewBox="0 0 160 160"><defs><clipPath id="phc"><rect x="0" y="0" width="159.5" height="159.5" rx="4"/></clipPath>
<linearGradient id="wood" x1="0" y1="0" x2="1" y2="1"><stop offset="0" stop-color="#978679"/><stop offset="1" stop-color="#6f6056"/></linearGradient>
<linearGradient id="hair" x1="0" y1="0" x2=".6" y2="1"><stop offset="0" stop-color="#b89270"/><stop offset=".35" stop-color="#94704e"/><stop offset=".7" stop-color="#5e4028"/><stop offset="1" stop-color="#3e2a1c"/></linearGradient>
<linearGradient id="bag" x1="0" y1="0" x2="0" y2="1"><stop offset="0" stop-color="#aaa59d"/><stop offset="1" stop-color="#9c978f"/></linearGradient>
<filter id="soft"><feGaussianBlur stdDeviation="0.45"/></filter></defs>
<g clip-path="url(#phc)"><g filter="url(#soft)">
<rect x="-2" y="-2" width="164" height="164" fill="#f1f1f0"/>
<path d="M14 0 L24 0 L30 14 L20 15Z" fill="#ece8e2"/>
<path d="M0 26 L28 24 L30 36 L0 40Z" fill="#eeebe7"/>
<path d="M0 41 L72 29.2 L72 34.5 L0 48.6Z" fill="#8a8a8a"/>
<path d="M0 41 L72 29.2 L72 30.8 L0 43Z" fill="#b0b0b0"/>
<path d="M23 42 L32 40 L45 44 L34 47Z" fill="#cdbba5"/>
<rect x="76.5" y="-2" width="3.5" height="25" fill="#7a7a7a"/>
<rect x="104.5" y="-2" width="4.5" height="16" fill="#5e5e5e"/>
<path d="M0 90 L9 88 L10 116 L0 118Z" fill="#f6f6f6"/>
<path d="M21 91 L31 89 L31 108 L22 110Z" fill="#f4f4f4"/>
<ellipse cx="26" cy="91" rx="5" ry="1.4" fill="#5a4434"/>
<path d="M0 114 L30 106 L50 100 L95 82 L125 80 L140 90 L140 160 L-2 160Z" fill="url(#wood)"/>
<path d="M0 130 L7 128 L8 146 L0 148Z" fill="#ececec"/>
<path d="M71 30 C72 20 88 13 100 15 L116 18 C119 24 119 36 118 48 L116 86 C108 92 94 92 86 88 L76 76 C72 60 70 44 71 30Z" fill="url(#bag)"/>
<path d="M76 24 C80 14 92 12 100 16" fill="none" stroke="#8c6a50" stroke-width="2.2"/>
<path d="M74 52 L86 62 L113 55" fill="none" stroke="#6b625a" stroke-width="1.2"/>
<path d="M100 14 L106 13 L116 46 L112 52Z" fill="#d8d8d6"/>
<path d="M112 17 L117 20 L120 32 L115 30Z" fill="#555"/>
<path d="M24.5 75 L68 52 L83 90 L44 117Z" fill="#161616"/>
<path d="M27.5 77 L67 56.5 L80.5 89 L45 113Z" fill="#f6f7fa"/>
<path d="M27.5 77 L67 56.5 L68.3 59.7 L28.8 80.5Z" fill="#2f8ae0"/>
<path d="M40 92 L62 80 M42 98 L65 86 M46 104 L70 91 M36 86 L58 74" stroke="#e8a0b8" stroke-width="1"/>
<path d="M50 95 L70 84 M52 101 L73 90" stroke="#60b0e8" stroke-width="1"/>
<path d="M43.5 116.7 L83 90 L118.5 103.7 L108 120 L87 140.7Z" fill="#dedee0"/>
<path d="M53.7 116.7 L83 96.5 L100 102 L68.5 124Z" fill="#2c2c2e"/>
<path d="M91 100 C99 95 112 98 121 104 L120 112 C111 110 102 110 95 106Z" fill="#e6c2aa"/>
<path d="M86 124 C91 119 101 120 106 128 L108 144 L94 146 C89 138 86 130 86 124Z" fill="#e0b89e"/>
<rect x="10" y="112" width="22" height="17" rx="3" transform="rotate(-20 21 120.5)" fill="#ef7d2e"/>
<rect x="14" y="115" width="14" height="11" rx="1.5" transform="rotate(-20 21 120.5)" fill="#ededed"/>
<path d="M28 130 C26 142 30 152 42 151 C52 150 50 132 56 127" fill="none" stroke="#1e1e1e" stroke-width="1.3"/>
<path d="M84 150 L106 146 L104 162 L84 162Z" fill="#3a2e26"/>
<path d="M114 34 C118 18 134 9 150 9 C160 9 164 16 164 24 L164 160 L142 160 C136 154 128 148 124 140 C118 130 122 118 118 108 C113 98 118 88 114 78 C110 66 113 58 111 48Z" fill="url(#hair)"/>
<path d="M126 28 C122 60 132 90 134 126 M138 20 C134 50 146 80 146 116 M150 16 C148 50 158 90 156 140" fill="none" stroke="#5a3c28" stroke-width="2.6" opacity=".55"/>
<path d="M122 40 C124 60 126 80 128 96" fill="none" stroke="#d4b090" stroke-width="1.6" opacity=".7"/>
<path d="M106 146 C118 138 140 140 160 146 L164 164 L104 164Z" fill="#c0c8d0"/>
<path d="M112 150 L118 162 M122 146 L128 160 M134 145 L140 158" stroke="#7e8a96" stroke-width="1.2"/>
</g></g></svg>
<div class="a" style="left:732.80px;top:233.60px;width:17px;height:17px;border:2.2px solid #00679e;border-radius:3px;background:#fff"></div>
<svg class="a" style="left:863.90px;top:237.20px;width:15.7px;height:15.4px" viewBox="2 2 20 19" preserveAspectRatio="none"><path fill="#a37508" stroke="#fff" stroke-width="7" paint-order="stroke" stroke-linejoin="round" d="M12,17.27L18.18,21L16.54,13.970L22,9.24L14.81,8.62L12,2L9.19,8.62L2,9.24L7.45,13.97L5.82,21L12,17.27Z"/></svg>
<div class="t" style="left:741.60px;top:397.15px;font-size:15.3px;color:#222;font-weight:400;transform:scaleX(0.9191);transform-origin:0 0;">Nextcloud mai...<span style="color:#767676"> .jpg</span></div>
<div class="t" style="left:728.10px;top:420.50px;font-size:11.2px;color:#6f6f6f;font-weight:400;transform:scaleX(0.8935);transform-origin:0 0;">4 years ago</div>
<svg class="a" style="left:872.10px;top:423.50px;width:14px;height:4px" viewBox="0 0 14 4"><g fill="#111"><circle cx="1.4" cy="2" r="1.75"/><circle cx="6.2" cy="2" r="1.75"/><circle cx="11" cy="2" r="1.75"/></g></svg>
<svg class="a" style="left:0;top:0;width:1536px;height:864px" viewBox="0 0 1536 864"><path fill="#00679e" transform="translate(923.50,225.40) scale(6.9)" d="M10,4H4C2.89,4 2,4.89 2,6V18A2,2 0 0,0 4,20H20A2,2 0 0,0 22,18V8C22,6.89 21.1,6 20,6H12L10,4Z"/><path fill="#fff" transform="translate(966.38,268.98) scale(3.36)" d="M3.9,12C3.9,10.29 5.29,8.9 7,8.9H11V7H7A5,5 0 0,0 2,12A5,5 0 0,0 7,17H11V15.1H7C5.29,15.1 3.9,13.71 3.9,12M8,13H16V11H8V13M17,7H13V8.9H17C18.71,8.9 20.1,10.29 20.1,12C20.1,13.71 18.71,15.1 17,15.1H13V17H17A5,5 0 0,0 22,12A5,5 0 0,0 17,7Z"/></svg>
<div class="a" style="left:931.60px;top:233.60px;width:17px;height:17px;border:2.2px solid #00679e;border-radius:3px;background:#fff"></div>
<div class="t" style="left:940.40px;top:397.15px;font-size:15.3px;color:#222;font-weight:400;transform:scaleX(0.8689);transform-origin:0 0;">Camera</div>
<div class="t" style="left:926.90px;top:420.50px;font-size:11.2px;color:#6f6f6f;font-weight:400;transform:scaleX(0.9055);transform-origin:0 0;">5 years ago</div>
<svg class="a" style="left:1070.90px;top:423.50px;width:14px;height:4px" viewBox="0 0 14 4"><g fill="#111"><circle cx="1.4" cy="2" r="1.75"/><circle cx="6.2" cy="2" r="1.75"/><circle cx="11" cy="2" r="1.75"/></g></svg>
<svg class="a" style="left:0;top:0;width:1536px;height:864px" viewBox="0 0 1536 864"><path fill="#00679e" transform="translate(1122.30,225.40) scale(6.9)" d="M10,4H4C2.89,4 2,4.89 2,6V18A2,2 0 0,0 4,20H20A2,2 0 0,0 22,18V8C22,6.89 21.1,6 20,6H12L10,4Z"/><path fill="#fff" transform="translate(1164.43,268.72) scale(3.37)" d="M15,14C12.33,14 7,15.33 7,18V20H23V18C23,15.33 17.67,14 15,14M6,10V7H4V10H1V12H4V15H6V12H9V10M15,12A4,4 0 0,0 19,8A4,4 0 0,0 15,4A4,4 0 0,0 11,8A4,4 0 0,0 15,12Z"/></svg>
<div class="a" style="left:1130.40px;top:233.60px;width:17px;height:17px;border:2.2px solid #00679e;border-radius:3px;background:#fff"></div>
<div class="t" style="left:1139.20px;top:397.15px;font-size:15.3px;color:#222;font-weight:400;transform:scaleX(0.8872);transform-origin:0 0;">Change-Prozess</div>
<div class="t" style="left:1125.70px;top:420.50px;font-size:11.2px;color:#6f6f6f;font-weight:400;transform:scaleX(0.9400);transform-origin:0 0;">4 months ago</div>
<svg class="a" style="left:1269.70px;top:423.50px;width:14px;height:4px" viewBox="0 0 14 4"><g fill="#111"><circle cx="1.4" cy="2" r="1.75"/><circle cx="6.2" cy="2" r="1.75"/><circle cx="11" cy="2" r="1.75"/></g></svg>
<svg class="a" style="left:0;top:0;width:1536px;height:864px" viewBox="0 0 1536 864"><path fill="#00679e" transform="translate(1321.10,225.40) scale(6.9)" d="M10,4H4C2.89,4 2,4.89 2,6V18A2,2 0 0,0 4,20H20A2,2 0 0,0 22,18V8C22,6.89 21.1,6 20,6H12L10,4Z"/></svg>
<div class="a" style="left:1329.20px;top:233.60px;width:17px;height:17px;border:2.2px solid #00679e;border-radius:3px;background:#fff"></div>
<div class="t" style="left:1338.00px;top:397.15px;font-size:15.3px;color:#222;font-weight:400;transform:scaleX(0.8976);transform-origin:0 0;">Collectives</div>
<div class="t" style="left:1324.50px;top:420.50px;font-size:11.2px;color:#6f6f6f;font-weight:400;transform:scaleX(0.9407);transform-origin:0 0;">last month</div>
<svg class="a" style="left:1468.50px;top:423.50px;width:14px;height:4px" viewBox="0 0 14 4"><g fill="#111"><circle cx="1.4" cy="2" r="1.75"/><circle cx="6.2" cy="2" r="1.75"/><circle cx="11" cy="2" r="1.75"/></g></svg>
<svg class="a" style="left:0;top:0;width:1536px;height:864px" viewBox="0 0 1536 864"><path fill="#00679e" transform="translate(327.10,461.40) scale(6.9)" d="M10,4H4C2.89,4 2,4.89 2,6V18A2,2 0 0,0 4,20H20A2,2 0 0,0 22,18V8C22,6.89 21.1,6 20,6H12L10,4Z"/><path fill="#fff" transform="translate(369.23,504.72) scale(3.37)" d="M15,14C12.33,14 7,15.33 7,18V20H23V18C23,15.33 17.67,14 15,14M6,10V7H4V10H1V12H4V15H6V12H9V10M15,12A4,4 0 0,0 19,8A4,4 0 0,0 15,4A4,4 0 0,0 11,8A4,4 0 0,0 15,12Z"/></svg>
<div class="a" style="left:335.20px;top:469.60px;width:17px;height:17px;border:2.2px solid #00679e;border-radius:3px;background:#fff"></div>
<div class="t" style="left:344.00px;top:633.15px;font-size:15.3px;color:#222;font-weight:400;transform:scaleX(0.9156);transform-origin:0 0;">Collectives (restor...</div>
<div class="t" style="left:330.50px;top:656.50px;font-size:11.2px;color:#6f6f6f;font-weight:400;transform:scaleX(0.9021);transform-origin:0 0;">3 years ago</div>
<svg class="a" style="left:474.50px;top:659.50px;width:14px;height:4px" viewBox="0 0 14 4"><g fill="#111"><circle cx="1.4" cy="2" r="1.75"/><circle cx="6.2" cy="2" r="1.75"/><circle cx="11" cy="2" r="1.75"/></g></svg>
<svg class="a" style="left:0;top:0;width:1536px;height:864px" viewBox="0 0 1536 864"><path fill="#00679e" transform="translate(525.90,461.40) scale(6.9)" d="M10,4H4C2.89,4 2,4.89 2,6V18A2,2 0 0,0 4,20H20A2,2 0 0,0 22,18V8C22,6.89 21.1,6 20,6H12L10,4Z"/><path fill="#fff" transform="translate(568.78,504.98) scale(3.36)" d="M3.9,12C3.9,10.29 5.29,8.9 7,8.9H11V7H7A5,5 0 0,0 2,12A5,5 0 0,0 7,17H11V15.1H7C5.29,15.1 3.9,13.71 3.9,12M8,13H16V11H8V13M17,7H13V8.9H17C18.71,8.9 20.1,10.29 20.1,12C20.1,13.71 18.71,15.1 17,15.1H13V17H17A5,5 0 0,0 22,12A5,5 0 0,0 17,7Z"/></svg>
<div class="a" style="left:534.00px;top:469.60px;width:17px;height:17px;border:2.2px solid #00679e;border-radius:3px;background:#fff"></div>
<div class="t" style="left:542.80px;top:633.15px;font-size:15.3px;color:#222;font-weight:400;transform:scaleX(0.9039);transform-origin:0 0;">Conference</div>
<div class="t" style="left:529.30px;top:656.50px;font-size:11.2px;color:#6f6f6f;font-weight:400;transform:scaleX(0.9371);transform-origin:0 0;">5 months ago</div>
<svg class="a" style="left:673.30px;top:659.50px;width:14px;height:4px" viewBox="0 0 14 4"><g fill="#111"><circle cx="1.4" cy="2" r="1.75"/><circle cx="6.2" cy="2" r="1.75"/><circle cx="11" cy="2" r="1.75"/></g></svg>
<svg class="a" style="left:0;top:0;width:1536px;height:864px" viewBox="0 0 1536 864"><path fill="#00679e" transform="translate(724.70,461.40) scale(6.9)" d="M10,4H4C2.89,4 2,4.89 2,6V18A2,2 0 0,0 4,20H20A2,2 0 0,0 22,18V8C22,6.89 21.1,6 20,6H12L10,4Z"/><path fill="#fff" transform="translate(766.83,504.72) scale(3.37)" d="M15,14C12.33,14 7,15.33 7,18V20H23V18C23,15.33 17.67,14 15,14M6,10V7H4V10H1V12H4V15H6V12H9V10M15,12A4,4 0 0,0 19,8A4,4 0 0,0 15,4A4,4 0 0,0 11,8A4,4 0 0,0 15,12Z"/></svg>
<div class="a" style="left:732.80px;top:469.60px;width:17px;height:17px;border:2.2px solid #00679e;border-radius:3px;background:#fff"></div>
<div class="t" style="left:741.60px;top:633.15px;font-size:15.3px;color:#222;font-weight:400;transform:scaleX(0.9302);transform-origin:0 0;">Corinne documents</div>
<div class="t" style="left:728.10px;top:656.50px;font-size:11.2px;color:#6f6f6f;font-weight:400;transform:scaleX(0.8987);transform-origin:0 0;">5 years ago</div>
<svg class="a" style="left:872.10px;top:659.50px;width:14px;height:4px" viewBox="0 0 14 4"><g fill="#111"><circle cx="1.4" cy="2" r="1.75"/><circle cx="6.2" cy="2" r="1.75"/><circle cx="11" cy="2" r="1.75"/></g></svg>
<svg class="a" style="left:0;top:0;width:1536px;height:864px" viewBox="0 0 1536 864"><path fill="#00679e" transform="translate(923.50,461.40) scale(6.9)" d="M10,4H4C2.89,4 2,4.89 2,6V18A2,2 0 0,0 4,20H20A2,2 0 0,0 22,18V8C22,6.89 21.1,6 20,6H12L10,4Z"/></svg>
<div class="a" style="left:931.60px;top:469.60px;width:17px;height:17px;border:2.2px solid #00679e;border-radius:3px;background:#fff"></div>
<div class="t" style="left:940.40px;top:633.15px;font-size:15.3px;color:#222;font-weight:400;transform:scaleX(0.8715);transform-origin:0 0;">Deck</div>
<div class="t" style="left:926.90px;top:656.50px;font-size:11.2px;color:#6f6f6f;font-weight:400;transform:scaleX(0.9415);transform-origin:0 0;">9 months ago</div>
<svg class="a" style="left:1070.90px;top:659.50px;width:14px;height:4px" viewBox="0 0 14 4"><g fill="#111"><circle cx="1.4" cy="2" r="1.75"/><circle cx="6.2" cy="2" r="1.75"/><circle cx="11" cy="2" r="1.75"/></g></svg>
<svg class="a" style="left:0;top:0;width:1536px;height:864px" viewBox="0 0 1536 864"><path fill="#00679e" transform="translate(1122.30,461.40) scale(6.9)" d="M10,4H4C2.89,4 2,4.89 2,6V18A2,2 0 0,0 4,20H20A2,2 0 0,0 22,18V8C22,6.89 21.1,6 20,6H12L10,4Z"/></svg>
<div class="a" style="left:1130.40px;top:469.60px;width:17px;height:17px;border:2.2px solid #00679e;border-radius:3px;background:#fff"></div>
<div class="t" style="left:1139.20px;top:633.15px;font-size:15.3px;color:#222;font-weight:400;transform:scaleX(0.8919);transform-origin:0 0;">Economics 101</div>
<div class="t" style="left:1125.70px;top:656.50px;font-size:11.2px;color:#6f6f6f;font-weight:400;transform:scaleX(0.9400);transform-origin:0 0;">4 months ago</div>
<svg class="a" style="left:1269.70px;top:659.50px;width:14px;height:4px" viewBox="0 0 14 4"><g fill="#111"><circle cx="1.4" cy="2" r="1.75"/><circle cx="6.2" cy="2" r="1.75"/><circle cx="11" cy="2" r="1.75"/></g></svg>
<svg class="a" style="left:0;top:0;width:1536px;height:864px" viewBox="0 0 1536 864"><path fill="#00679e" transform="translate(1321.10,461.40) scale(6.9)" d="M10,4H4C2.89,4 2,4.89 2,6V18A2,2 0 0,0 4,20H20A2,2 0 0,0 22,18V8C22,6.89 21.1,6 20,6H12L10,4Z"/><path fill="#fff" transform="translate(1363.23,504.72) scale(3.37)" d="M15,14C12.33,14 7,15.33 7,18V20H23V18C23,15.33 17.67,14 15,14M6,10V7H4V10H1V12H4V15H6V12H9V10M15,12A4,4 0 0,0 19,8A4,4 0 0,0 15,4A4,4 0 0,0 11,8A4,4 0 0,0 15,12Z"/></svg>
<div class="a" style="left:1329.20px;top:469.60px;width:17px;height:17px;border:2.2px solid #00679e;border-radius:3px;background:#fff"></div>
<div class="t" style="left:1338.00px;top:633.15px;font-size:15.3px;color:#222;font-weight:400;transform:scaleX(0.9231);transform-origin:0 0;">Energy provider</div>
<div class="t" style="left:1324.50px;top:656.50px;font-size:11.2px;color:#6f6f6f;font-weight:400;transform:scaleX(0.9379);transform-origin:0 0;">12 months ago</div>
<svg class="a" style="left:1468.50px;top:659.50px;width:14px;height:4px" viewBox="0 0 14 4"><g fill="#111"><circle cx="1.4" cy="2" r="1.75"/><circle cx="6.2" cy="2" r="1.75"/><circle cx="11" cy="2" r="1.75"/></g></svg>
<svg class="a" style="left:0;top:0;width:1536px;height:864px" viewBox="0 0 1536 864"><path fill="#00679e" transform="translate(327.10,697.40) scale(6.9)" d="M10,4H4C2.89,4 2,4.89 2,6V18A2,2 0 0,0 4,20H20A2,2 0 0,0 22,18V8C22,6.89 21.1,6 20,6H12L10,4Z"/><path fill="#fff" transform="translate(370.50,741.24) scale(3.32)" d="M12,5.5A3.5,3.5 0 0,1 15.5,9A3.5,3.5 0 0,1 12,12.5A3.5,3.5 0 0,1 8.5,9A3.5,3.5 0 0,1 12,5.5M5,8C5.56,8 6.08,8.15 6.53,8.42C6.38,9.85 6.8,11.27 7.66,12.38C7.16,13.34 6.16,14 5,14A3,3 0 0,1 2,11A3,3 0 0,1 5,8M19,8A3,3 0 0,1 22,11A3,3 0 0,1 19,14C17.84,14 16.84,13.34 16.34,12.38C17.2,11.27 17.62,9.850 17.47,8.42C17.92,8.15 18.44,8 19,8M5.5,18.25C5.5,16.18 8.41,14.5 12,14.5C15.59,14.5 18.5,16.18 18.5,18.25V20H5.5V18.25M0,20V18.5C0,17.11 1.890,15.940 4.45,15.6C3.86,16.28 3.5,17.22 3.5,18.25V20H0M24,20H20.5V18.25C20.5,17.22 20.14,16.28 19.55,15.6C22.11,15.94 24,17.11 24,18.5V20Z"/></svg>
<div class="a" style="left:335.20px;top:705.60px;width:17px;height:17px;border:2.2px solid #00679e;border-radius:3px;background:#fff"></div>
<svg class="a" style="left:0;top:0;width:1536px;height:864px" viewBox="0 0 1536 864"><path fill="#00679e" transform="translate(525.90,697.40) scale(6.9)" d="M10,4H4C2.89,4 2,4.89 2,6V18A2,2 0 0,0 4,20H20A2,2 0 0,0 22,18V8C22,6.89 21.1,6 20,6H12L10,4Z"/></svg>
<div class="a" style="left:534.00px;top:705.60px;width:17px;height:17px;border:2.2px solid #00679e;border-radius:3px;background:#fff"></div>
<svg class="a" style="left:0;top:0;width:1536px;height:864px" viewBox="0 0 1536 864"><path fill="#00679e" transform="translate(724.70,697.40) scale(6.9)" d="M10,4H4C2.89,4 2,4.89 2,6V18A2,2 0 0,0 4,20H20A2,2 0 0,0 22,18V8C22,6.89 21.1,6 20,6H12L10,4Z"/><path fill="#fff" transform="translate(766.83,740.72) scale(3.37)" d="M15,14C12.33,14 7,15.33 7,18V20H23V18C23,15.33 17.67,14 15,14M6,10V7H4V10H1V12H4V15H6V12H9V10M15,12A4,4 0 0,0 19,8A4,4 0 0,0 15,4A4,4 0 0,0 11,8A4,4 0 0,0 15,12Z"/></svg>
<div class="a" style="left:732.80px;top:705.60px;width:17px;height:17px;border:2.2px solid #00679e;border-radius:3px;background:#fff"></div>
<svg class="a" style="left:0;top:0;width:1536px;height:864px" viewBox="0 0 1536 864"><path fill="#00679e" transform="translate(923.50,697.40) scale(6.9)" d="M10,4H4C2.89,4 2,4.89 2,6V18A2,2 0 0,0 4,20H20A2,2 0 0,0 22,18V8C22,6.89 21.1,6 20,6H12L10,4Z"/></svg>
<div class="a" style="left:931.60px;top:705.60px;width:17px;height:17px;border:2.2px solid #00679e;border-radius:3px;background:#fff"></div>
<svg class="a" style="left:0;top:0;width:1536px;height:864px" viewBox="0 0 1536 864"><path fill="#00679e" transform="translate(1122.30,697.40) scale(6.9)" d="M10,4H4C2.89,4 2,4.89 2,6V18A2,2 0 0,0 4,20H20A2,2 0 0,0 22,18V8C22,6.89 21.1,6 20,6H12L10,4Z"/></svg>
<div class="a" style="left:1130.40px;top:705.60px;width:17px;height:17px;border:2.2px solid #00679e;border-radius:3px;background:#fff"></div>
<svg class="a" style="left:0;top:0;width:1536px;height:864px" viewBox="0 0 1536 864"><path fill="#00679e" transform="translate(1321.10,697.40) scale(6.9)" d="M10,4H4C2.89,4 2,4.89 2,6V18A2,2 0 0,0 4,20H20A2,2 0 0,0 22,18V8C22,6.89 21.1,6 20,6H12L10,4Z"/></svg>
<div class="a" style="left:1329.20px;top:705.60px;width:17px;height:17px;border:2.2px solid #00679e;border-radius:3px;background:#fff"></div>
</body></html>
